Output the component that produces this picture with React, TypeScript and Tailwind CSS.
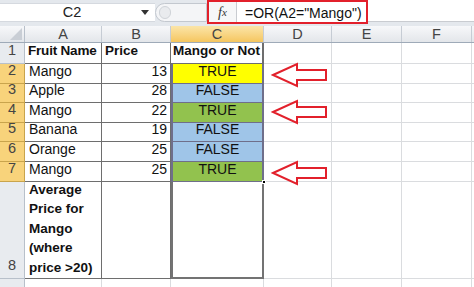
import React from "react";

type Row = {
  n: string;
  h: string;
  a: string;
  b: string;
  c: string;
  fill: string;
};

const rows: Row[] = [
  { n: "2", h: "h-[20px]", a: "Mango", b: "13", c: "TRUE", fill: "bg-[#ffff00]" },
  { n: "3", h: "h-[19px]", a: "Apple", b: "28", c: "FALSE", fill: "bg-[#9fc5e8]" },
  { n: "4", h: "h-[20px]", a: "Mango", b: "22", c: "TRUE", fill: "bg-[#92c24e]" },
  { n: "5", h: "h-[19px]", a: "Banana", b: "19", c: "FALSE", fill: "bg-[#9fc5e8]" },
  { n: "6", h: "h-[20px]", a: "Orange", b: "25", c: "FALSE", fill: "bg-[#9fc5e8]" },
  { n: "7", h: "h-[20px]", a: "Mango", b: "25", c: "TRUE", fill: "bg-[#92c24e]" },
];

// light grid cells to the right of the table
function EmptyCells() {
  return (
    <>
      <div className="w-[68px] border-r border-b border-[#dadcdf]" />
      <div className="w-[70px] border-r border-b border-[#dadcdf]" />
      <div className="w-[70px] border-r border-b border-[#dadcdf]" />
      <div className="flex-1 border-b border-[#dadcdf]" />
    </>
  );
}

function Arrow({ y }: { y: number }) {
  const pts = [
    [273, y],
    [297, y - 11],
    [297, y - 5],
    [326, y - 5],
    [326, y + 5],
    [297, y + 5],
    [297, y + 11],
  ]
    .map((p) => p.join(","))
    .join(" ");
  return <polygon points={pts} fill="white" stroke="#e2202b" strokeWidth="2" strokeLinejoin="miter" />;
}

export default function App() {
  return (
    <main className="relative h-[287px] w-[474px] overflow-hidden bg-white font-['Liberation_Sans',Arial,sans-serif] text-[14px] text-[#111]">
      {/* Formula bar */}
      <div className="flex h-[26px] bg-[#e4e8ed]">
        <div className="mt-[3px] flex h-[19px] w-[155px] items-center border-y border-[#d5d9df] bg-white">
          <span className="flex-1 pl-[4px] text-center text-[14.5px] text-[#222]">C2</span>
          <svg width="10" height="6" viewBox="0 0 10 6" className="mr-[5px]">
            <polygon points="1,0 9,0 5,5" fill="#333" />
          </svg>
        </div>
        <div className="mt-[3px] flex h-[19px] w-[52px] items-center rounded-l-full border border-[#c3c8cf] bg-[#f4f5f7] pl-[3px]">
          <div className="h-[13px] w-[12px] rounded-full border border-[#cfd3d8] bg-[#e9ebee]" />
        </div>
        <div className="flex h-[24px] w-[161px] border-2 border-[#e2202b] bg-white">
          <div className="flex w-[28px] items-center justify-center border-r border-[#c9ccd1] bg-[#f6f7f8] font-['Liberation_Serif',serif] text-[14px] italic text-[#333]">
            f<span className="text-[11px]">x</span>
          </div>
          <span className="pl-[8px] pt-[1px] text-[14px] leading-[20px]">=OR(A2="Mango")</span>
        </div>
        <div className="h-[22px] flex-1 border-b border-[#c9ccd1] bg-white" />
      </div>

      {/* Column headers */}
      <div className="flex h-[17px] border-b border-[#9eaab8] bg-gradient-to-b from-[#f7f8fa] to-[#e3e6ea] text-[14.5px] leading-[16px] text-[#444]">
        <div className="relative w-[25px] border-r border-[#b8c0ca]">
          <svg width="12" height="12" viewBox="0 0 12 12" className="absolute right-[2px] bottom-[2px]">
            <polygon points="12,0 12,12 0,12" fill="#c9ced5" />
          </svg>
        </div>
        <div className="w-[77px] border-r border-[#c6ccd4] text-center">A</div>
        <div className="w-[69px] border-r border-[#c6ccd4] text-center">B</div>
        <div className="w-[93px] border-r border-[#c6ccd4] bg-gradient-to-b from-[#fbe5a8] to-[#f5c65e] text-center">C</div>
        <div className="w-[68px] border-r border-[#c6ccd4] text-center">D</div>
        <div className="w-[70px] border-r border-[#c6ccd4] text-center">E</div>
        <div className="w-[70px] border-r border-[#c6ccd4] text-center">F</div>
        <div className="flex-1" />
      </div>

      {/* Row 1 */}
      <div className="flex h-[21px]">
        <div className="flex w-[25px] items-end justify-center border-r border-b border-[#b8c0ca] bg-[#e8ebef] pb-[1px] text-[14.5px] text-[#444]">1</div>
        <div className="flex w-[77px] items-end border-r border-b border-[#6e6e6e] pb-[2px] pl-[3px] text-[13.5px] font-bold tracking-[-0.2px] whitespace-nowrap">Fruit Name</div>
        <div className="flex w-[69px] items-end border-r border-b border-[#6e6e6e] pb-[2px] pl-[3px] text-[13.5px] font-bold">Price</div>
        <div className="flex w-[93px] items-end border-r-2 border-b border-[#6e6e6e] pb-[2px] pl-[2px] text-[13.5px] font-bold whitespace-nowrap">Mango or Not</div>
        <EmptyCells />
      </div>

      {/* Rows 2-7 */}
      {rows.map((r) => (
        <div key={r.n} className={`flex ${r.h}`}>
          <div className="flex w-[25px] items-end justify-center border-r border-b border-[#c9a44c] bg-[#f8d37b] pb-[1px] text-[14.5px] text-[#444]">
            {r.n}
          </div>
          <div className="flex w-[77px] items-end border-r border-b border-[#6e6e6e] pb-[1px] pl-[4px]">{r.a}</div>
          <div className="flex w-[69px] items-end justify-end border-r border-b border-[#6e6e6e] pb-[1px] pr-[3px]">{r.b}</div>
          <div className={`flex w-[93px] items-end justify-center border-x-2 border-b border-[#6f6f8a] pb-[1px] ${r.fill}`}>
            {r.c}
          </div>
          <EmptyCells />
        </div>
      ))}

      {/* Row 8 */}
      <div className="flex h-[97px]">
        <div className="flex w-[25px] items-end justify-center border-r border-b border-[#b8c0ca] bg-[#e8ebef] pb-[1px] text-[14.5px] text-[#444]">8</div>
        <div className="flex w-[77px] items-end border-r border-b border-[#6e6e6e] pb-[1px] pl-[4px] text-[13.5px] font-bold leading-[19.5px]">
          Average Price for Mango (where price &gt;20)
        </div>
        <div className="w-[69px] border-r border-b border-[#6e6e6e]" />
        <div className="w-[93px] border-x-2 border-b-2 border-[#737373]" />
        <EmptyCells />
      </div>

      {/* Row 9 */}
      <div className="flex h-[10px]">
        <div className="w-[25px] border-r border-[#b8c0ca] bg-[#e8ebef]" />
        <div className="w-[77px] border-r border-[#dadcdf]" />
        <div className="w-[69px] border-r border-[#dadcdf]" />
        <div className="w-[93px] border-r border-[#dadcdf]" />
        <div className="w-[68px] border-r border-[#dadcdf]" />
        <div className="w-[70px] border-r border-[#dadcdf]" />
        <div className="w-[70px] border-r border-[#dadcdf]" />
      </div>

      {/* Fill handle */}
      <div className="absolute top-[180px] left-[262px] h-[4px] w-[4px] border border-white bg-black" />

      {/* Red arrows */}
      <svg className="pointer-events-none absolute top-0 left-0" width="474" height="287">
        <Arrow y={75} />
        <Arrow y={112} />
        <Arrow y={173} />
      </svg>
    </main>
  );
}
